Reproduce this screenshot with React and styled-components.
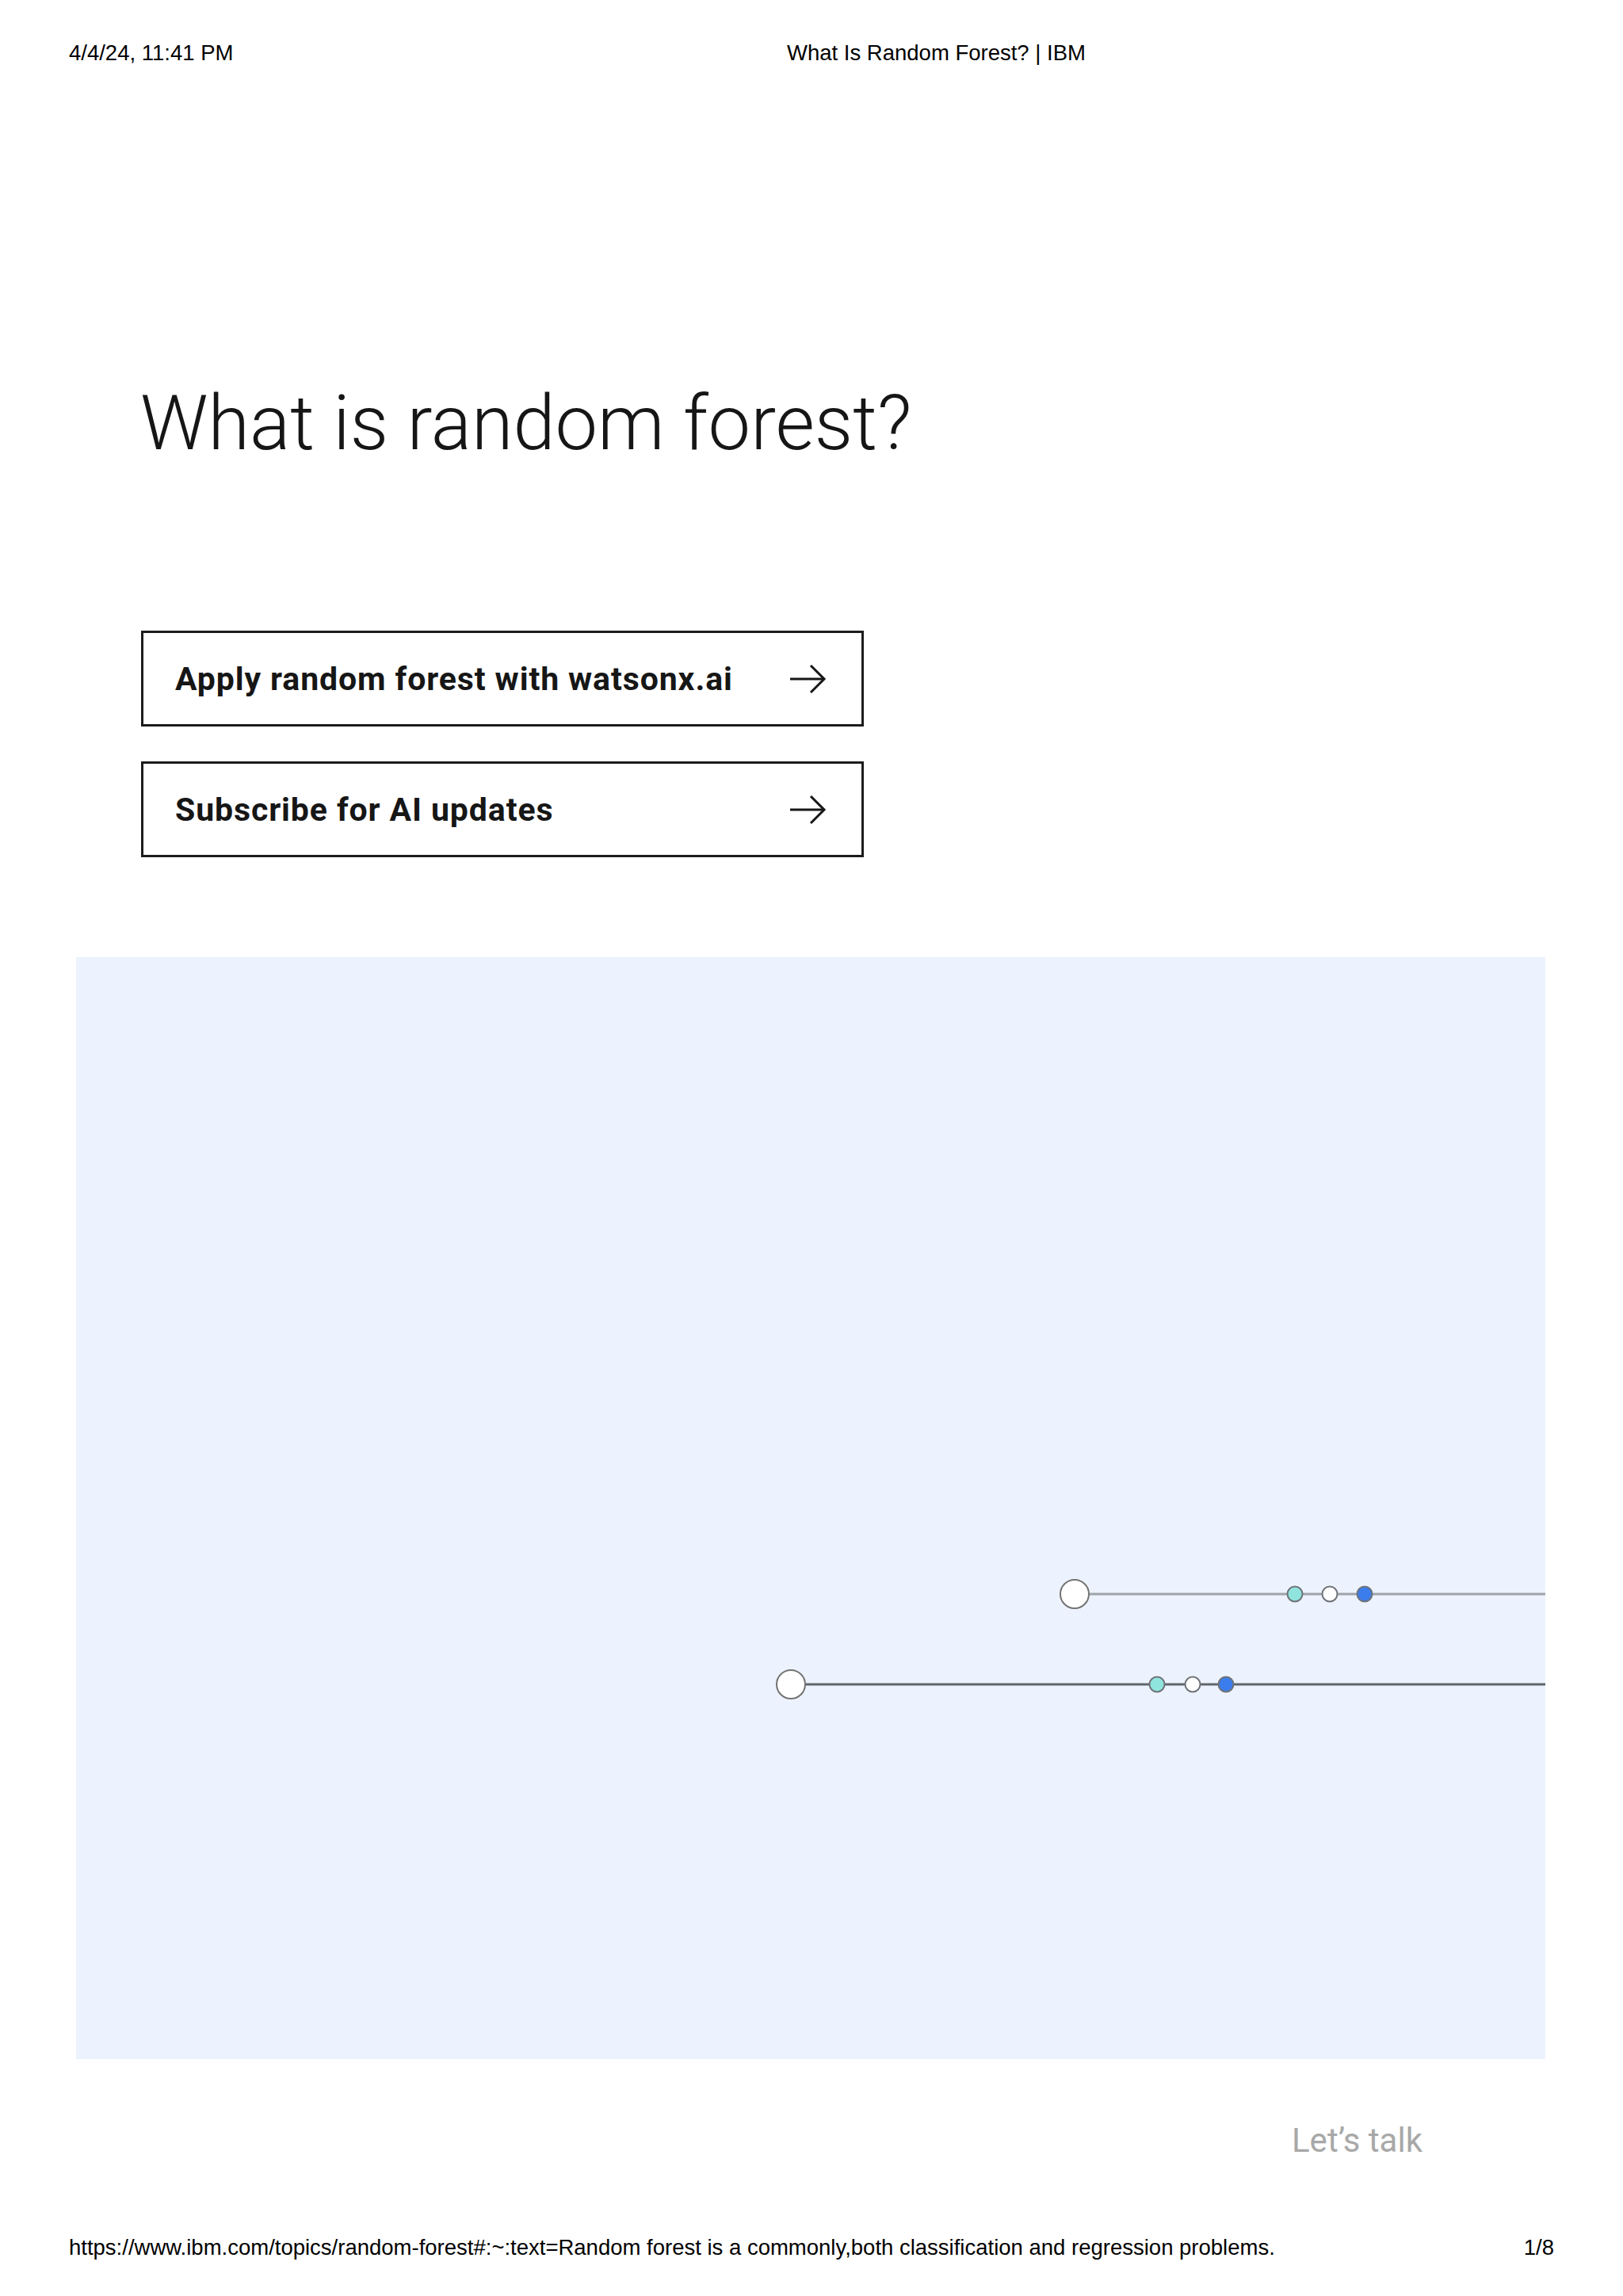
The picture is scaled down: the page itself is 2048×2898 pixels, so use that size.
import React from 'react'
import styled, { createGlobalStyle } from 'styled-components';

const GlobalStyle = createGlobalStyle`
    body{
        margin:0;
        background:#ffffff;
        font-family:"Liberation Sans", Arial, sans-serif;
    }
`

const buttons = [
    'Apply random forest with watsonx.ai',
    'Subscribe for AI updates',
]

// graphic inside the blue panel, coordinates relative to the panel
const tracks = [
    { y: 804, start: 1260, dots: [1538, 1582, 1626], line: '#9ea3a8' },
    { y: 918, start: 902, dots: [1364, 1409, 1451], line: '#5f666c' },
]
const dotColors = ['#8fe5de', '#ffffff', '#3b7ded']

function Arrow() {
    return (
        <svg width="46" height="38" viewBox="0 0 46 38" fill="none">
            <path d="M0 19H43" stroke="#161616" strokeWidth="3" />
            <path d="M26 2L43 19L26 36" stroke="#161616" strokeWidth="3" />
        </svg>
    )
}

function Tracks() {
    return (
        <svg width="1854" height="1391" viewBox="0 0 1854 1391">
            {tracks.map((t, i) => (
                <g key={i}>
                    <line x1={t.start} y1={t.y} x2="1854" y2={t.y} stroke={t.line} strokeWidth="3" />
                    <circle cx={t.start} cy={t.y} r="18" fill="#ffffff" stroke="#737373" strokeWidth="2" />
                    {t.dots.map((x, j) => (
                        <circle key={j} cx={x} cy={t.y} r="9.5" fill={dotColors[j]} stroke="#6f7378" strokeWidth="2" />
                    ))}
                </g>
            ))}
        </svg>
    )
}

function App() {
    return (
        <Page>
            <GlobalStyle />
            <PrintHeader>
                <Stamp>4/4/24, 11:41 PM</Stamp>
                <span>What Is Random Forest? | IBM</span>
            </PrintHeader>
            <Main>
                <Heading>What is random forest?</Heading>
                <Actions>
                    {buttons.map(label => (
                        <CtaButton key={label}>
                            <span>{label}</span>
                            <Arrow />
                        </CtaButton>
                    ))}
                </Actions>
            </Main>
            <Panel>
                <Tracks />
            </Panel>
            <TalkRow>Let’s talk</TalkRow>
            <PrintFooter>
                <span>https://www.ibm.com/topics/random-forest#:~:text=Random forest is a commonly,both classification and regression problems.</span>
                <span>1/8</span>
            </PrintFooter>
        </Page>
    )
}

export default App

const Page = styled.div`
    width:2048px;
    min-height:2898px;
    display:flex;
    flex-direction:column;
`
const PrintHeader = styled.div`
    display:flex;
    padding:51px 87px 0;
    font-size:27.5px;
    line-height:31px;
    color:#000;
`
const Stamp = styled.span`
    flex:0 0 906px;
`
const Main = styled.div`
    padding-left:177px;
    display:flex;
    flex-direction:column;
`
const Heading = styled.h1`
    margin:405px 0 0;
    font-family:Roboto, "Liberation Sans", sans-serif;
    font-weight:300;
    font-size:95.5px;
    line-height:95px;
    color:#161616;
`
const Actions = styled.div`
    margin-top:214px;
    margin-left:1px;
    display:flex;
    flex-direction:column;
    gap:44px;
`
const CtaButton = styled.a`
    box-sizing:border-box;
    width:912px;
    height:121px;
    border:3px solid #1c1c1c;
    display:flex;
    align-items:center;
    justify-content:space-between;
    padding:0 44px 0 40px;
    font-family:Roboto, "Liberation Sans", sans-serif;
    font-weight:700;
    font-size:41px;
    letter-spacing:0.9px;
    color:#161616;
    cursor:pointer;
`
const Panel = styled.div`
    margin:126px 0 0 96px;
    width:1854px;
    height:1391px;
    background:#edf3fe;
    svg{
        display:block;
    }
`
const TalkRow = styled.div`
    margin-top:82px;
    padding-left:1630px;
    font-family:Roboto, "Liberation Sans", sans-serif;
    font-size:42px;
    line-height:42px;
    color:#a8a8a8;
`
const PrintFooter = styled.div`
    margin-top:98px;
    display:flex;
    justify-content:space-between;
    padding:0 87px;
    font-size:27.5px;
    line-height:31px;
    color:#000;
`
